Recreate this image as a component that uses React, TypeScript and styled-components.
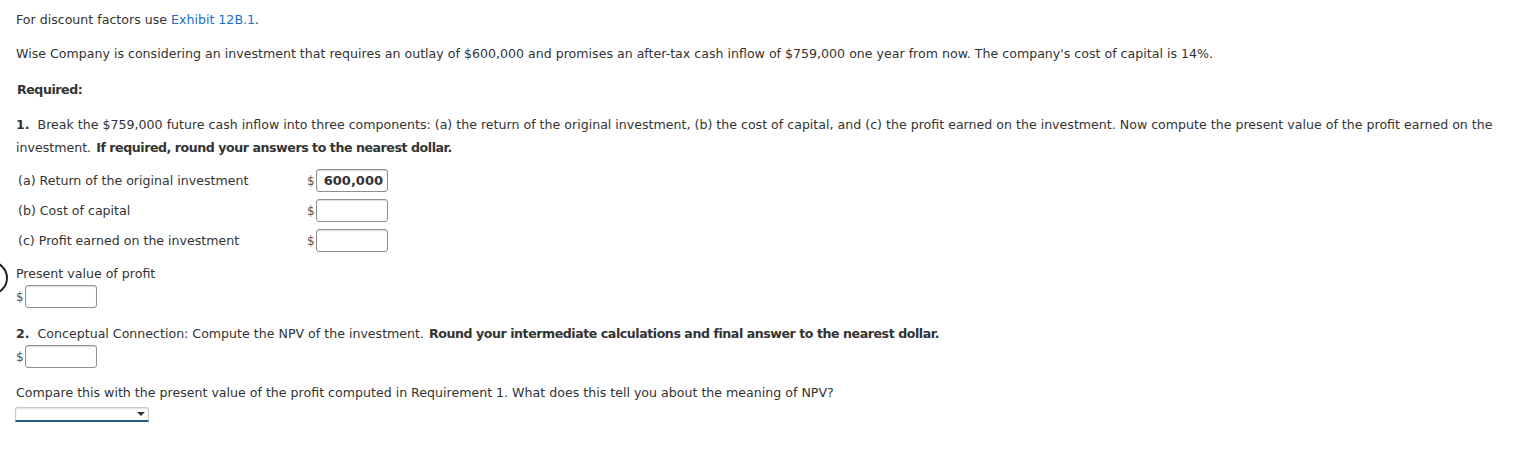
import React from "react";
import styled, { createGlobalStyle } from "styled-components";

const GlobalStyle = createGlobalStyle`
  html, body {
    margin: 0;
    padding: 0;
    background: #fff;
  }
  body {
    font-family: Verdana, "DejaVu Sans", sans-serif;
    font-size: 12.6px;
    color: #333;
  }
`;

const Page = styled.div`
  position: relative;
  padding: 8px 16px 30px 16px;
  width: 1527px;
  box-sizing: border-box;
`;

const Para = styled.p<{ mt?: number }>`
  margin: ${({ mt }) => mt ?? 0}px 0 0 0;
  line-height: 23px;
`;

const Link = styled.a`
  color: #1a6fc2;
  text-decoration: none;
`;

const Bold = styled.strong`
  font-weight: 700;
  letter-spacing: -0.45px;
  padding-left: 1px;
`;

const Num = styled.strong`
  font-weight: 700;
  margin-right: 4px;
`;

const AnswerTable = styled.div`
  display: grid;
  grid-template-columns: 289px auto;
  row-gap: 7px;
  margin: 10px 0 0 2px;
  align-items: center;
`;

const RowLabel = styled.div`
  line-height: 23px;
`;

const Cell = styled.div`
  display: flex;
  align-items: center;
`;

const Dollar = styled.span`
  font-size: 12px;
  width: 9px;
  color: #555;
`;

const AmountInput = styled.input`
  box-sizing: border-box;
  width: 72px;
  height: 23px;
  border: 1px solid #8f8f8f;
  border-radius: 3px;
  box-shadow: inset 0 1px 1px rgba(0, 0, 0, 0.15);
  font-family: inherit;
  font-size: 13px;
  font-weight: 700;
  color: #333;
  text-align: right;
  padding: 0 4px;
  background: #fff;
  outline: none;
`;

const Block = styled.div<{ mt: number }>`
  margin-top: ${({ mt }) => mt}px;
`;

const SelectBox = styled.div`
  margin: 3px 0 0 -1px;
  width: 134px;
  height: 15px;
  box-sizing: border-box;
  border: 1px solid #c8c8c8;
  border-bottom: 2px solid #1f5f8f;
  border-radius: 3px 3px 0 0;
  box-shadow: inset 0 1px 2px rgba(0, 0, 0, 0.12);
  position: relative;
`;

const Caret = styled.span`
  position: absolute;
  right: 3px;
  top: 4px;
  width: 0;
  height: 0;
  border-left: 4px solid transparent;
  border-right: 4px solid transparent;
  border-top: 4px solid #333;
`;

const Ring = styled.div`
  position: absolute;
  left: -26px;
  top: 261px;
  width: 30px;
  height: 30px;
  border: 2px solid #222;
  border-radius: 50%;
`;

const rows = [
  { label: "(a) Return of the original investment", value: "600,000" },
  { label: "(b) Cost of capital", value: "" },
  { label: "(c) Profit earned on the investment", value: "" },
];

const App = () => {
  return (
    <>
      <GlobalStyle />
      <Page>
        <Ring />
        <Para>
          For discount factors use <Link href="#">Exhibit 12B.1</Link>.
        </Para>
        <Para mt={11}>
          Wise Company is considering an investment that requires an outlay of
          $600,000 and promises an after-tax cash inflow of $759,000 one year
          from now. The company's cost of capital is 14%.
        </Para>
        <Para mt={13}>
          <Bold>Required:</Bold>
        </Para>
        <Para mt={12}>
          <Num>1.</Num> Break the $759,000 future cash inflow into three
          components: (a) the return of the original investment, (b) the cost
          of capital, and (c) the profit earned on the investment. Now compute
          the present value of the profit earned on the investment.{" "}
          <Bold>If required, round your answers to the nearest dollar.</Bold>
        </Para>
        <AnswerTable>
          {rows.map((r) => (
            <React.Fragment key={r.label}>
              <RowLabel>{r.label}</RowLabel>
              <Cell>
                <Dollar>$</Dollar>
                <AmountInput defaultValue={r.value} />
              </Cell>
            </React.Fragment>
          ))}
        </AnswerTable>
        <Block mt={10}>
          <Para>Present value of profit</Para>
          <Cell>
            <Dollar>$</Dollar>
            <AmountInput />
          </Cell>
        </Block>
        <Block mt={14}>
          <Para>
            <Num>2.</Num> Conceptual Connection: Compute the NPV of the
            investment.{" "}
            <Bold>
              Round your intermediate calculations and final answer to the
              nearest dollar.
            </Bold>
          </Para>
          <Cell>
            <Dollar>$</Dollar>
            <AmountInput />
          </Cell>
        </Block>
        <Block mt={13}>
          <Para>
            Compare this with the present value of the profit computed in
            Requirement 1. What does this tell you about the meaning of NPV?
          </Para>
          <SelectBox>
            <Caret />
          </SelectBox>
        </Block>
      </Page>
    </>
  );
};

export default App;
